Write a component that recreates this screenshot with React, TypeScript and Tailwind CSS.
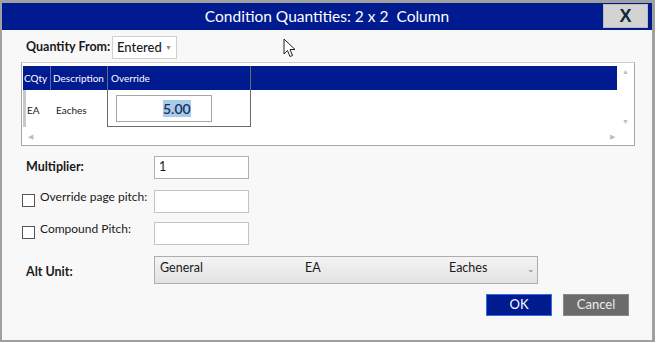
export default function App() {
  return (
    <div className="w-[658px] h-[343px] bg-white relative overflow-hidden font-['Segoe_UI',Lato,sans-serif] text-[#1a1a1a]">
      <div className="w-[655px] h-[342px] border-l-2 border-r-[3px] border-t-[3px] border-b-2 border-[#a0a0a0] bg-[#f8f8f8] flex flex-col">
        {/* Title bar */}
        <div className="h-[27px] shrink-0 bg-[#001a8f] grid grid-cols-[1fr_auto_1fr]">
          <div />
          <div className="text-white text-[15.5px] leading-[27px] whitespace-pre">Condition Quantities: 2 x 2  Column</div>
          <div className="flex justify-end items-start">
            <div className="mt-[1px] mr-[4px] w-[45px] h-[24px] bg-[#d3d3d3] border border-[#bcbcbc] flex items-center justify-center text-[#15233a] text-[18px] font-bold font-['Liberation_Sans',sans-serif]">
              X
            </div>
          </div>
        </div>

        {/* Quantity From */}
        <div className="mt-[6px] pl-[24px] flex items-center h-[23px]">
          <div className="w-[86px] text-[12.5px] font-bold">Quantity From:</div>
          <div className="w-[65px] h-[23px] bg-white border border-[#cfcfcf] flex items-center pl-[4px] pr-[4px] justify-between">
            <span className="text-[13px] font-medium">Entered</span>
            <span className="text-[7px] text-[#888]">▼</span>
          </div>
        </div>

        {/* Grid */}
        <div className="mt-[3px] ml-[19px] w-[614px] h-[84px] shrink-0 bg-white border border-[#a8a8a8] border-t-[#cfcfcf] flex">
          <div className="flex-1 flex flex-col pt-[3px] pl-[1px]">
            <div className="flex">
              <div className="w-[28px] flex flex-col">
                <div className="h-[24px] bg-[#001a8f] border-r border-[#5a66a8] text-white text-[10px] flex items-center pl-[1px]">CQty</div>
                <div className="h-[37px] flex items-center">
                  <div className="w-[3px] h-full bg-[#c8c8c8]" />
                  <span className="text-[10px] pl-[1px] pt-[3px]">EA</span>
                </div>
              </div>
              <div className="w-[56px] flex flex-col">
                <div className="h-[24px] bg-[#001a8f] text-white text-[10px] flex items-center pl-[2px]">Description</div>
                <div className="h-[37px] flex items-center pl-[5px] pt-[3px] text-[10px]">Eaches</div>
              </div>
              <div className="w-[144px] flex flex-col border-x border-b border-[#6a6a6a]">
                <div className="h-[24px] bg-[#001a8f] text-white text-[10px] flex items-center pl-[3px]">Override</div>
                <div className="h-[36px] pt-[5px] pl-[8px]">
                  <div className="w-[96px] h-[27px] bg-white border border-[#a5a5a5] flex items-center pl-[46px]">
                    <span className="bg-[#a9cbea] text-[#14305e] text-[14px] font-semibold leading-[17px]">5.00</span>
                  </div>
                </div>
              </div>
              <div className="flex-1 h-[24px] bg-[#001a8f]" />
            </div>
            <div className="flex-1 flex items-center justify-between pl-[5px] pr-[2px] text-[7px] text-[#bdbdbd]">
              <span>◀</span>
              <span>▶</span>
            </div>
          </div>
          <div className="w-[17px] flex flex-col items-center justify-between pt-[3px] pb-[19px] text-[7px] text-[#bdbdbd]">
            <span>▲</span>
            <span>▼</span>
          </div>
        </div>

        {/* Multiplier */}
        <div className="mt-[10px] pl-[24px] flex items-center h-[23px]">
          <div className="w-[128px] text-[12.5px] font-bold">Multiplier:</div>
          <div className="w-[95px] h-[23px] bg-white border border-[#b0b0b0] flex items-center pl-[4px] text-[12.5px]">1</div>
        </div>

        {/* Override page pitch */}
        <div className="mt-[11px] pl-[20px] flex items-center h-[23px]">
          <div className="w-[13px] h-[13px] border border-[#555] bg-white -mt-[2px]" />
          <div className="w-[114px] ml-[5px] text-[12px] -mt-[10px] whitespace-nowrap">Override page pitch:</div>
          <div className="w-[95px] h-[23px] bg-white border border-[#c4c4c4]" />
        </div>

        {/* Compound Pitch */}
        <div className="mt-[9px] pl-[20px] flex items-center h-[23px]">
          <div className="w-[13px] h-[13px] border border-[#555] bg-white -mt-[2px]" />
          <div className="w-[114px] ml-[5px] text-[12px] -mt-[10px] whitespace-nowrap">Compound Pitch:</div>
          <div className="w-[95px] h-[23px] bg-white border border-[#c4c4c4]" />
        </div>

        {/* Alt Unit */}
        <div className="mt-[11px] pl-[24px] flex items-center h-[28px]">
          <div className="w-[128px] text-[12.5px] font-bold pt-[4px]">Alt Unit:</div>
          <div className="w-[384px] h-[28px] border border-[#adadad] bg-gradient-to-b from-[#f4f4f4] to-[#e2e2e2] flex items-start text-[12.5px] pt-[2px]">
            <span className="w-[150px] pl-[5px]">General</span>
            <span className="w-[144px]">EA</span>
            <span className="w-[78px]">Eaches</span>
            <span className="text-[9px] text-[#777] pt-[3px]">⌄</span>
          </div>
        </div>

        {/* Buttons */}
        <div className="mt-[10px] flex justify-end pr-[23px] gap-[11px]">
          <div className="w-[66px] h-[22px] bg-[#001a8f] border border-[#2f6fe0] text-white text-[13px] flex items-center justify-center">OK</div>
          <div className="w-[66px] h-[22px] bg-[#6b6b6b] border border-[#8a8a8a] text-[#ececec] text-[13px] flex items-center justify-center">Cancel</div>
        </div>
      </div>

      {/* Mouse cursor */}
      <svg className="absolute left-[283px] top-[38px]" width="14" height="20" viewBox="0 0 14 20">
        <path d="M1 1 L1 16 L4.5 12.5 L7 18.5 L9.5 17.5 L7 11.5 L12 11.5 Z" fill="white" stroke="#222" strokeWidth="1" strokeLinejoin="round" />
      </svg>
    </div>
  );
}
